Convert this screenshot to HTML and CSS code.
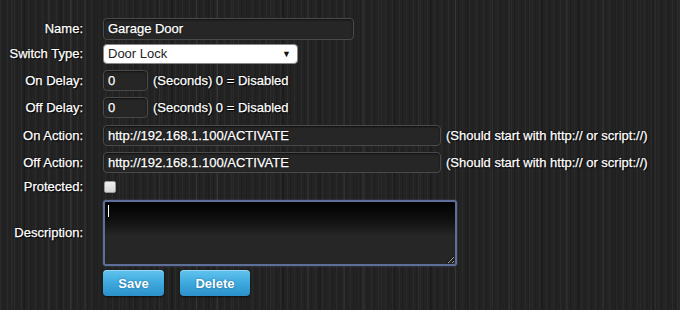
FILE: index.html
```html
<!DOCTYPE html>
<html>
<head>
<meta charset="utf-8">
<link rel="stylesheet" href="styles.css">
</head>
<body>
<form class="form">
  <label class="label">Name:</label>
  <div class="field"><input class="input input-name" type="text" value="Garage Door"></div>

  <label class="label">Switch Type:</label>
  <div class="field">
    <div class="select-wrap">
      <select class="select"><option>Door Lock</option></select>
      <span class="arrow">&#9660;</span>
    </div>
  </div>

  <label class="label">On Delay:</label>
  <div class="field"><input class="input input-small" type="text" value="0"><span class="hint">(Seconds) 0 = Disabled</span></div>

  <label class="label">Off Delay:</label>
  <div class="field"><input class="input input-small" type="text" value="0"><span class="hint">(Seconds) 0 = Disabled</span></div>

  <label class="label">On Action:</label>
  <div class="field"><input class="input input-action" type="text" value="http://192.168.1.100/ACTIVATE"><span class="hint">(Should start with http:// or script://)</span></div>

  <label class="label">Off Action:</label>
  <div class="field"><input class="input input-action" type="text" value="http://192.168.1.100/ACTIVATE"><span class="hint">(Should start with http:// or script://)</span></div>

  <label class="label">Protected:</label>
  <div class="field"><input class="check" type="checkbox"></div>

  <label class="label">Description:</label>
  <div class="field"><div class="ta-wrap"><textarea class="textarea"></textarea><span class="caret"></span></div></div>

  <div></div>
  <div class="field buttons"><button type="button" class="btn btn-save">Save</button><button type="button" class="btn btn-delete">Delete</button></div>
</form>
</body>
</html>
```

FILE: styles.css
```css
html, body {
  margin: 0;
  padding: 0;
  height: 100%;
}
body {
  width: 680px;
  height: 310px;
  overflow: hidden;
  font-family: "Liberation Sans", Arial, sans-serif;
  font-size: 13px;
  color: #fff;
  background-color: #232323;
  background-image:
    repeating-linear-gradient(90deg, rgba(255,255,255,0.035) 0 1px, transparent 1px 3px, rgba(0,0,0,0.12) 3px 4px, transparent 4px 7px),
    repeating-linear-gradient(90deg, transparent 0 11px, rgba(255,255,255,0.05) 11px 12px, transparent 12px 23px, rgba(0,0,0,0.15) 23px 25px, transparent 25px 37px),
    repeating-linear-gradient(90deg, transparent 0 70px, rgba(255,255,255,0.045) 70px 72px, transparent 72px 146px);
}
.form {
  display: grid;
  grid-template-columns: 83px 1fr;
  grid-template-rows: 25px 25px 28px 26px 30px 24px 25px 67px 34px;
  column-gap: 20px;
  padding-top: 16px;
}
.label {
  display: flex;
  align-items: center;
  justify-content: flex-end;
  color: #fff;
  font-size: 13px;
  -webkit-text-stroke: 0.25px #fff;
  text-shadow: 0 0 2px #000, 1px 1px 1px #000;
}
.field {
  display: flex;
  align-items: center;
  gap: 5px;
}
.input {
  box-sizing: border-box;
  height: 21px;
  background: #262626;
  border: 1px solid #4a4a4a;
  border-radius: 4px;
  color: #fff;
  font-family: "Liberation Sans", Arial, sans-serif;
  font-size: 13px;
  -webkit-text-stroke: 0.25px #fff;
  padding: 0 4px;
  margin: 0;
  text-shadow: 0 0 2px #000;
  box-shadow: inset 0 1px 2px rgba(0,0,0,0.6);
  outline: none;
}
.input-name { width: 251px; height: 22px; }
.input-small { width: 45px; height: 21px; }
.input-action { width: 338px; height: 21px; }
.hint {
  color: #fff;
  font-size: 13px;
  -webkit-text-stroke: 0.25px #fff;
  text-shadow: 0 0 2px #000, 1px 1px 1px #000;
}
.select-wrap {
  position: relative;
  width: 195px;
  height: 20px;
}
.select {
  appearance: none;
  -webkit-appearance: none;
  box-sizing: border-box;
  width: 195px;
  height: 20px;
  margin: 0;
  background: #fff;
  border: 1px solid #888;
  border-radius: 4px;
  color: #222;
  font-family: "Liberation Sans", Arial, sans-serif;
  font-size: 13px;
  padding: 0 4px;
  outline: none;
}
.arrow {
  position: absolute;
  right: 7px;
  top: 5px;
  font-size: 9px;
  color: #111;
  pointer-events: none;
}
.check {
  appearance: none;
  -webkit-appearance: none;
  width: 12px;
  height: 12px;
  margin: 0 0 0 1px;
  background: linear-gradient(#f0f0f0, #d6d6d6);
  border: 1px solid #999;
  border-radius: 2px;
  box-sizing: border-box;
}
.ta-wrap {
  position: relative;
  width: 354px;
  height: 66px;
  margin-top: 1px;
}
.textarea {
  box-sizing: border-box;
  width: 354px;
  height: 66px;
  margin: 0;
  display: block;
  border: 2px solid #5d6f98;
  border-radius: 3px;
  background: linear-gradient(#000 0%, #111 30%, #262626 55%, #262626 100%);
  color: #fff;
  resize: both;
  outline: none;
  box-shadow: 0 0 2px rgba(120,140,200,0.5);
}
.caret {
  position: absolute;
  left: 5px;
  top: 5px;
  width: 1px;
  height: 12px;
  background: #fff;
}
.buttons {
  gap: 16px;
  align-items: center;
}
.btn {
  box-sizing: border-box;
  height: 26px;
  border: none;
  border-radius: 4px;
  background: linear-gradient(#62c4ee 0%, #3ea9de 50%, #2c90ca 100%);
  box-shadow: inset 0 1px 0 rgba(255,255,255,0.35), 0 1px 2px rgba(0,0,0,0.6);
  color: #fff;
  font-family: "Liberation Sans", Arial, sans-serif;
  font-weight: bold;
  font-size: 13px;
  padding: 0;
  text-shadow: 0 0 2px rgba(0,60,100,0.6);
}
.btn-save { width: 61px; }
.btn-delete { width: 70px; }
```
